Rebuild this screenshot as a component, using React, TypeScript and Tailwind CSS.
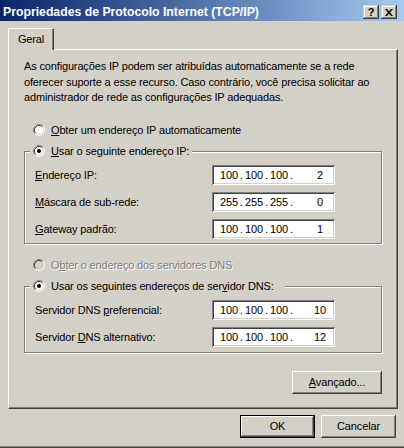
import React from "react";

function Radio({ checked, disabled }: { checked?: boolean; disabled?: boolean }) {
  return (
    <svg width="12" height="12" viewBox="0 0 12 12" className="shrink-0">
      <circle cx="6" cy="6" r="5" fill={disabled ? "#d4d0c8" : "#ffffff"} />
      <path d="M2.11 9.89A5.5 5.5 0 0 1 9.89 2.11" stroke="#808080" strokeWidth="1" fill="none" />
      <path d="M9.89 2.11A5.5 5.5 0 0 1 2.11 9.89" stroke="#ffffff" strokeWidth="1" fill="none" />
      <path d="M2.82 9.18A4.5 4.5 0 0 1 9.18 2.82" stroke="#404040" strokeWidth="1" fill="none" />
      <path d="M9.18 2.82A4.5 4.5 0 0 1 2.82 9.18" stroke="#d4d0c8" strokeWidth="1" fill="none" />
      {checked && <circle cx="6" cy="6" r="2" fill="#000000" />}
    </svg>
  );
}

function IpBox({ a, b, c, d }: { a: string; b: string; c: string; d: string }) {
  return (
    <div className="w-[123px] h-[20px] bg-white flex items-center pl-[6px] shadow-[inset_1px_1px_#808080,inset_-1px_-1px_#ffffff,inset_2px_2px_#404040,inset_-2px_-2px_#d4d0c8]">
      <span className="w-[22px] text-center">{a}</span>
      <span className="w-[3px] text-center">.</span>
      <span className="w-[22px] text-center">{b}</span>
      <span className="w-[3px] text-center">.</span>
      <span className="w-[22px] text-center">{c}</span>
      <span className="w-[3px] text-center">.</span>
      <span className="ml-[13px] w-[28px] text-center">{d}</span>
    </div>
  );
}

function Row({ label, ip }: { label: React.ReactNode; ip: [string, string, string, string] }) {
  return (
    <div className="flex items-center h-[20px]">
      <div className="w-[177px] whitespace-nowrap">{label}</div>
      <IpBox a={ip[0]} b={ip[1]} c={ip[2]} d={ip[3]} />
    </div>
  );
}

function RaisedButton({ children, def }: { children: React.ReactNode; def?: boolean }) {
  const inner = (
    <div className="w-full h-full flex items-center justify-center shadow-[inset_-1px_-1px_#404040,inset_1px_1px_#ffffff,inset_-2px_-2px_#808080,inset_2px_2px_#d4d0c8]">
      {children}
    </div>
  );
  if (def) {
    return <div className="w-[75px] h-[23px] border border-black">{inner}</div>;
  }
  return <div className="w-[75px] h-[23px]">{inner}</div>;
}

export default function App() {
  return (
    <div className="w-[404px] h-[448px] bg-[#d4d0c8] overflow-hidden text-black text-[11px] tracking-[-0.15px] font-['Liberation_Sans',Arial,sans-serif] shadow-[inset_0_-1px_#404040,inset_0_-2px_#808080]">
      {/* Title bar */}
      <div className="h-[21px] pt-[3px] flex items-center bg-linear-to-r from-[#0a246a] to-[#a6caf0] pl-[3px] pr-[7px]">
        <div className="flex-1 text-white font-bold text-[12.25px] tracking-normal whitespace-nowrap leading-none">
          Propriedades de Protocolo Internet (TCP/IP)
        </div>
        <div className="flex gap-[2px]">
          <div className="w-[16px] h-[14px] bg-[#d4d0c8] flex items-center justify-center shadow-[inset_-1px_-1px_#404040,inset_1px_1px_#d4d0c8,inset_-2px_-2px_#808080,inset_2px_2px_#ffffff]">
            <span className="font-bold text-[11px] leading-none tracking-normal">?</span>
          </div>
          <div className="w-[16px] h-[14px] bg-[#d4d0c8] flex items-center justify-center shadow-[inset_-1px_-1px_#404040,inset_1px_1px_#d4d0c8,inset_-2px_-2px_#808080,inset_2px_2px_#ffffff]">
            <svg width="8" height="7" viewBox="0 0 8 7">
              <path d="M0 0h2l2 2.4L6 0h2L5 3.5 8 7H6L4 4.6 2 7H0l3-3.5z" fill="#000" />
            </svg>
          </div>
        </div>
      </div>

      {/* Tab */}
      <div className="mt-[7px] pl-[8px] flex">
        <div className="relative z-10 -mb-[1px] h-[22px] w-[46px] bg-[#d4d0c8] border-t border-l border-r border-t-white border-l-white border-r-[#404040] shadow-[inset_-1px_0_#808080] flex items-center justify-center pb-[1px]">
          Geral
        </div>
      </div>

      {/* Panel */}
      <div className="ml-[8px] w-[390px] h-[360px] border border-t-white border-l-white border-r-[#404040] border-b-[#404040] shadow-[inset_-1px_-1px_#808080] px-[15px] flex flex-col">
        <p className="mt-[9px] leading-[15.5px] whitespace-nowrap">
          As configurações IP podem ser atribuídas automaticamente se a rede
          <br />
          oferecer suporte a esse recurso. Caso contrário, você precisa solicitar ao
          <br />
          administrador de rede as configurações IP adequadas.
        </p>

        <div className="mt-[16.5px] h-[16px] flex items-center gap-[6px] pl-[9px]">
          <Radio />
          <span>
            <span className="underline">O</span>bter um endereço IP automaticamente
          </span>
        </div>

        <div className="relative mt-[13px] border border-[#808080] shadow-[inset_1px_1px_#ffffff,1px_1px_#ffffff] pt-[13px] pb-[4px] pl-[10px] flex flex-col gap-[7px]">
          <div className="absolute left-[5px] -top-[9px] h-[16px] w-[162px] bg-[#d4d0c8] pl-[3px] flex items-center gap-[6px] whitespace-nowrap">
            <Radio checked />
            <span>
              <span className="underline">U</span>sar o seguinte endereço IP:
            </span>
          </div>
          <Row label={<><span className="underline">E</span>ndereço IP:</>} ip={["100", "100", "100", "2"]} />
          <Row label={<><span className="underline">M</span>áscara de sub-rede:</>} ip={["255", "255", "255", "0"]} />
          <Row label={<><span className="underline">G</span>ateway padrão:</>} ip={["100", "100", "100", "1"]} />
        </div>

        <div className="mt-[13px] h-[16px] flex items-center gap-[6px] pl-[9px] text-[#808080] [text-shadow:1px_1px_0_#ffffff]">
          <Radio disabled />
          <span>
            O<span className="underline">b</span>ter o endereço dos servidores DNS
          </span>
        </div>

        <div className="relative mt-[13px] border border-[#808080] shadow-[inset_1px_1px_#ffffff,1px_1px_#ffffff] pt-[13px] pb-[5px] pl-[10px] flex flex-col gap-[7px]">
          <div className="absolute left-[5px] -top-[9px] h-[16px] w-[255px] bg-[#d4d0c8] pl-[3px] flex items-center gap-[6px] whitespace-nowrap">
            <Radio checked />
            <span>
              Usar os seguintes endereços de ser<span className="underline">v</span>idor DNS:
            </span>
          </div>
          <Row label={<>Servidor DNS <span className="underline">p</span>referencial:</>} ip={["100", "100", "100", "10"]} />
          <Row label={<>Servidor <span className="underline">D</span>NS alternativo:</>} ip={["100", "100", "100", "12"]} />
        </div>

        <div className="mt-[18px] flex justify-end">
          <div className="w-[90px] h-[23px] flex items-center justify-center shadow-[inset_-1px_-1px_#404040,inset_1px_1px_#ffffff,inset_-2px_-2px_#808080,inset_2px_2px_#d4d0c8]">
            <span>
              <span className="underline">A</span>vançado...
            </span>
          </div>
        </div>
      </div>

      {/* Footer */}
      <div className="mt-[6px] flex justify-end gap-[6px] pr-[8px]">
        <RaisedButton def>OK</RaisedButton>
        <RaisedButton>Cancelar</RaisedButton>
      </div>
    </div>
  );
}
